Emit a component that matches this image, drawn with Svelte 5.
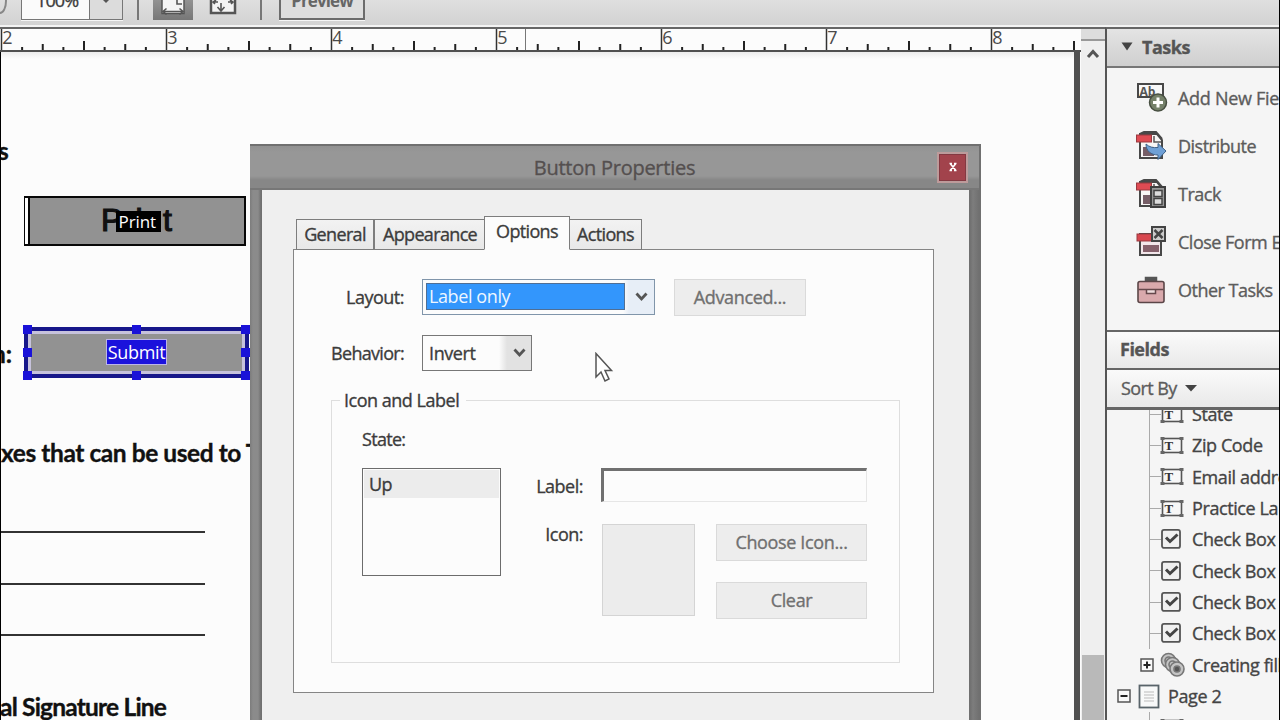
<script>
  const inches = [2, 3, 4, 5, 6, 7, 8];
  const inchWidth = 165;
  const ticks = [];
  for (let i = 0; i <= 52; i++) {
    const x = 1.5 + (i * inchWidth) / 8;
    const height = i % 8 === 0 ? 23 : i % 4 === 0 ? 9 : i % 2 === 0 ? 6 : 3;
    ticks.push({ x, height, major: i % 8 === 0 });
  }

  const tasks = [
    { icon: 'add', label: 'Add New Field' },
    { icon: 'distribute', label: 'Distribute' },
    { icon: 'track', label: 'Track' },
    { icon: 'close', label: 'Close Form Editing' },
    { icon: 'other', label: 'Other Tasks' },
  ];

  const fields = [
    { type: 'text', label: 'State' },
    { type: 'text', label: 'Zip Code' },
    { type: 'text', label: 'Email address' },
    { type: 'text', label: 'Practice Large' },
    { type: 'check', label: 'Check Box 1' },
    { type: 'check', label: 'Check Box 2' },
    { type: 'check', label: 'Check Box 3' },
    { type: 'check', label: 'Check Box 4' },
    { type: 'group', label: 'Creating filler' },
    { type: 'page', label: 'Page 2' },
    { type: 'text', label: '' },
  ];

  const tabs = ['General', 'Appearance', 'Options', 'Actions'];
  const handles = ['nw', 'n', 'ne', 'w', 'e', 'sw', 's', 'se'];
  let activeTab = $state('Options');
</script>

<div class="app">
  <header class="toolbar">
    <div class="zoom-back"></div>
    <div class="zoom">
      <span class="zoom-value">100%</span>
      <span class="zoom-arrow">
        <svg width="12" height="8" viewBox="0 0 12 8"><path d="M0 0h12L6 6z" fill="#555" /></svg>
      </span>
    </div>
    <i class="divider"></i>
    <div class="fit active">
      <svg width="40" height="20" viewBox="0 0 40 20">
        <path d="M9 -2V13.500H31V-2Z" fill="#f4f4f4" stroke="#555" stroke-width="1.500" />
        <path d="M10 11.500H30M13.500 8.500L10 11.500l3.500 3M26.500 8.500L30 11.500l-3.500 3M24 -1v5h5" fill="none" stroke="#555" stroke-width="1.600" />
      </svg>
    </div>
    <div class="fit">
      <svg width="40" height="20" viewBox="0 0 40 20">
        <path d="M8 -3V13H32V-3" fill="#f4f4f4" stroke="#555" stroke-width="2.500" />
        <path d="M18 3v7M14.500 7l3.500 4 3.500-4M10 2h5M30 2h-5M13 0l-3 2 2 2M27 0l3 2-2 2" fill="none" stroke="#555" stroke-width="1.600" />
      </svg>
    </div>
    <i class="divider second"></i>
    <button class="preview"><span>Preview</span></button>
  </header>

  <div class="workspace">
    <div class="viewer">
      <svg class="ruler" width="1081" height="25" viewBox="0 0 1081 21">
        {#each ticks as tick}
          <line x1={tick.x} x2={tick.x} y1={21 - tick.height} y2="21" stroke={tick.major ? '#333' : '#222'} stroke-width={tick.major ? 1.5 : 2} />
        {/each}
        <line x1="525.5" x2="525.5" y1="0" y2="21" stroke="#777" />
        {#each inches as inch, i}
          <text x={2.2 + i * inchWidth} y="14.500">{inch}</text>
        {/each}
      </svg>

      <div class="page">
        <p class="line first">s</p>
        <div class="field print">
          <span class="caption">Print</span>
          <span class="tag">Print</span>
        </div>
        <div class="submit-row">
          <p class="line">n:</p>
          <div class="field submit">
            <span class="tag">Submit</span>
            {#each handles as handle}
              <i class="handle {handle}"></i>
            {/each}
          </div>
        </div>
        <p class="line boxes">xes that can be used to Test</p>
        <hr />
        <hr />
        <hr />
        <p class="line signature">al Signature Line</p>
      </div>
    </div>

    <div class="scrollbar">
      <div class="split"></div>
      <svg width="14" height="12" viewBox="0 0 14 12"><path d="M2 9L7 3.500l5 5.500" fill="none" stroke="#555" stroke-width="3" /></svg>
      <div class="thumb"></div>
    </div>

    <aside>
      <h3 class="tasks-title">
        <svg width="12" height="9" viewBox="0 0 12 9"><path d="M0.500 0.500h11L6 8.500z" fill="#444" /></svg>
        Tasks
      </h3>
      <ul class="tasks">
        {#each tasks as task}
          <li>
            <svg width="34" height="34" viewBox="0 0 34 34">
              {#if task.icon === 'add'}
                <rect x="3" y="3" width="25" height="13" fill="#f8f8f8" stroke="#484848" stroke-width="2" />
                <text x="4.500" y="14.500" class="ab">Ab</text>
                <circle cx="23" cy="21.500" r="8.500" fill="#75816a" stroke="#474f41" stroke-width="1.500" />
                <path d="M23 16.500v10M18 21.500h10" stroke="#fff" stroke-width="3" />
              {:else if task.icon === 'close'}
                <rect x="5" y="9" width="21" height="21" fill="#f2e6ea" stroke="#484848" stroke-width="2" />
                <rect x="2" y="9" width="15" height="7" fill="#d8474f" stroke="#993a40" />
                <rect x="8" y="20" width="16" height="7" fill="#86616c" />
                <rect x="17" y="2" width="13" height="14" fill="#ccc" stroke="#444" stroke-width="2" />
                <path d="M19.500 5l8 8m0-8l-8 8" stroke="#444" stroke-width="2.500" />
              {:else if task.icon === 'other'}
                <path d="M11 8V5h10v3" fill="#555" stroke="#555" stroke-width="2.500" />
                <rect x="3" y="8.500" width="26" height="21" rx="2" fill="#d9a9ac" stroke="#5b4648" stroke-width="1.600" />
                <path d="M3.500 16.500h25M11.500 16.500v4h9v-4" fill="#edd" stroke="#65484b" stroke-width="1.500" />
              {:else}
                <path d="M5 5h17l5 6v18H5z" fill="#f8f6f6" stroke="#484848" stroke-width="2" />
                <path d="M5 5l4-2h12l6 7" fill="none" stroke="#484848" stroke-width="2" />
                <path d="M19 7v6h7" fill="none" stroke="#555" stroke-width="1.500" />
                <rect x="1.500" y="6" width="15" height="7" fill="#df4b53" stroke="#993a40" />
                <rect x="8" y="18" width="11" height="9" fill="#765e67" />
                {#if task.icon === 'distribute'}
                  <path d="M11 15c3 3 7 4 12 3.500V14.500L31 22l-8 8.500V26c-7 0-12-4-12-11z" fill="#6fa0d6" stroke="#3f6288" />
                {:else}
                  <rect x="16" y="10" width="14" height="20" fill="#999" stroke="#3f3f3f" stroke-width="2" />
                  <rect x="19" y="13.500" width="8" height="6" fill="#ddd" stroke="#444" stroke-width="1.500" />
                  <rect x="19" y="21.500" width="8" height="6" fill="#ddd" stroke="#444" stroke-width="1.500" />
                {/if}
              {/if}
            </svg>
            <span>{task.label}</span>
          </li>
        {/each}
      </ul>
      <h3 class="fields-title">Fields</h3>
      <div class="sort">
        Sort By
        <svg width="12" height="7" viewBox="0 0 12 7"><path d="M0 0h12L6 6.500z" fill="#444" /></svg>
      </div>
      <div class="tree">
        {#each fields as field}
          <div class="node {field.type}">
            {#if field.type === 'text'}
              <svg width="24" height="19" viewBox="0 0 24 19">
                <rect x="2.500" y="2.500" width="19" height="14" fill="#f7f7f7" stroke="#555" stroke-width="1.600" />
                <path d="M0.500 1h4v3h-4zM19.500 1h4v3h-4zM0.500 15h4v3h-4zM19.500 15h4v3h-4z" fill="#666" />
                <text x="4.500" y="13.500" class="serif-t">T</text>
              </svg>
            {:else if field.type === 'check'}
              <svg width="24" height="20" viewBox="0 0 24 20">
                <rect x="2" y="0.900" width="18" height="18" rx="2" fill="#f0f0f0" stroke="#555" stroke-width="1.800" />
                <path d="M6 8.500l4 4L17.500 5.500" fill="none" stroke="#444" stroke-width="3" />
              </svg>
            {:else if field.type === 'group'}
              <svg class="toggle" width="14" height="14" viewBox="0 0 14 14"><rect x="1" y="1" width="12" height="12" fill="#f8f8f8" stroke="#555" stroke-width="1.500" /><path d="M7 3.500v7M3.500 7h7" stroke="#222" stroke-width="2" /></svg>
              <svg width="26" height="26" viewBox="0 0 26 26">
                <g fill="#c4c4c4" stroke="#777" stroke-width="1.600">
                  <circle cx="8.500" cy="8.500" r="7" /><circle cx="8.500" cy="8.500" r="3.500" />
                  <circle cx="12.500" cy="12.500" r="7" /><circle cx="12.500" cy="12.500" r="3.500" />
                  <circle cx="17" cy="17" r="7" /><circle cx="17" cy="17" r="3" fill="#555" />
                </g>
              </svg>
            {:else}
              <svg class="toggle" width="14" height="14" viewBox="0 0 14 14"><rect x="1" y="1" width="12" height="12" fill="#f8f8f8" stroke="#555" stroke-width="1.500" /><path d="M3.500 7h7" stroke="#222" stroke-width="2" /></svg>
              <svg width="22" height="25" viewBox="0 0 22 25">
                <rect x="1.500" y="1.500" width="19" height="22" fill="#f8f9f9" stroke="#59646a" stroke-width="1.800" />
                <path d="M6 8h10M6 11h10M6 14h10M6 17h10" stroke="#bbb" />
              </svg>
            {/if}
            <span>{field.label}</span>
          </div>
        {/each}
      </div>
    </aside>
  </div>

  <section class="dialog">
    <div class="titlebar">
      <h2>Button Properties</h2>
      <button class="close" aria-label="Close">
        <svg width="10" height="10" viewBox="0 0 10 10"><path d="M1.500 1.500h2.500M6 1.500h2.500M1.500 8.500h2.500M6 8.500h2.500M2.500 2l5 6M7.500 2l-5 6" stroke="#fff" stroke-width="1.600" /></svg>
      </button>
    </div>
    <div class="body">
      <nav>
        {#each tabs as tab}
          <button class="tab {tab.toLowerCase()}" class:selected={activeTab === tab} onclick={() => (activeTab = tab)}>{tab}</button>
        {/each}
      </nav>
      <div class="panel">
        <div class="row">
          <span class="name layout-name">Layout:</span>
          <div class="select layout">
            <span class="value">Label only</span>
            <svg width="13" height="10" viewBox="0 0 13 10"><path d="M1.500 1.500l5 5.500 5-5.500" fill="none" stroke="#555" stroke-width="2.800" /></svg>
          </div>
          <button class="btn advanced">Advanced...</button>
        </div>
        <div class="row second">
          <span class="name behavior-name">Behavior:</span>
          <div class="select behavior">
            <span class="value">Invert</span>
            <svg width="13" height="10" viewBox="0 0 13 10"><path d="M1.500 1.500l5 5.500 5-5.500" fill="none" stroke="#555" stroke-width="2.800" /></svg>
          </div>
        </div>
        <div class="group-box">
          <span class="legend">Icon and Label</span>
          <div class="columns">
            <div class="states">
              <span class="state-name">State:</span>
              <div class="listbox"><div class="option">Up</div></div>
            </div>
            <div class="names">
              <span>Label:</span>
              <span>Icon:</span>
            </div>
            <div class="controls">
              <div class="input"></div>
              <div class="icon-row">
                <div class="thumbnail"></div>
                <div class="actions-col">
                  <button class="btn choose">Choose Icon...</button>
                  <button class="btn clear">Clear</button>
                </div>
              </div>
            </div>
          </div>
        </div>
      </div>
    </div>
  </section>

  <svg class="cursor" width="20" height="32" viewBox="0 0 20 32">
    <path d="M2 1.500V25l5-5 4 9 4-2-4-8.500h6.500z" fill="#fff" stroke="#555" stroke-width="1.500" />
  </svg>
</div>

<style>
  :global(body) {
    margin: 0;
    overflow: hidden;
  }

  .app {
    position: relative;
    box-sizing: border-box;
    width: 1280px;
    height: 720px;
    display: flex;
    flex-direction: column;
    overflow: hidden;
    border-right: 1px solid #000;
    background: #fcfcfc;
    font-family: 'Open Sans', 'Noto Sans', sans-serif;
    font-size: 18px;
    color: #3c3c3c;
    -webkit-text-stroke: 0.35px currentColor;
  }

  .app * {
    box-sizing: border-box;
  }

  h2,
  h3,
  p,
  ul {
    margin: 0;
    padding: 0;
  }

  button {
    font: inherit;
    color: inherit;
    padding: 0;
  }

  svg {
    display: block;
    flex: none;
  }

  svg text {
    -webkit-text-stroke: 0;
  }

  /* Toolbar */
  .toolbar {
    flex: none;
    height: 27px;
    display: flex;
    align-items: flex-start;
    background: linear-gradient(#dfdfdf, #d2d2d2);
    border-bottom: 2px solid #f3f3f3;
    overflow: hidden;
  }

  .zoom-back {
    width: 14px;
    height: 26px;
    margin: -12px 14px 0 -7px;
    border: 2px solid #888;
    border-radius: 50%;
  }

  .zoom {
    display: flex;
    width: 102px;
    height: 20px;
    border: 1.5px solid #777;
    border-top: 0;
    background: #fbfbfb;
    box-shadow: 0 1px 0 #f5f5f5;
  }

  .zoom-value {
    width: 67px;
    padding-left: 14px;
    line-height: 20px;
    margin-top: -10px;
    letter-spacing: -0.9px;
  }

  .zoom-arrow {
    flex: 1;
    display: flex;
    justify-content: center;
    border-left: 1.5px solid #777;
    background: #dcdcdc;
  }

  .zoom-arrow svg {
    margin-top: -3px;
  }

  .divider {
    width: 2px;
    height: 20px;
    margin: 0 14px;
    background: #777;
  }

  .divider.second {
    margin: 0 18px 0 17px;
  }

  .fit {
    width: 40px;
    height: 20px;
    margin-right: 10px;
    overflow: hidden;
  }

  .fit + .fit {
    margin-right: 0;
  }

  .fit.active {
    background: linear-gradient(#929292, #777);
  }

  .preview {
    display: flex;
    justify-content: center;
    align-items: flex-start;
    width: 86px;
    height: 20px;
    margin-left: -1px;
    border: 2px solid #6c6c6c;
    border-top: 0;
    background: #dedede;
    color: #666;
    font-weight: 700;
    font-size: 17px;
    line-height: 20px;
    letter-spacing: -0.9px;
    box-shadow: 0 1px 0 #f5f5f5;
  }

  .preview span {
    margin-top: -9px;
    -webkit-text-stroke: 0;
  }

  .workspace {
    flex: 1;
    min-height: 0;
    display: flex;
  }

  .viewer {
    flex: none;
    width: 1081px;
    display: flex;
    flex-direction: column;
  }

  .ruler {
    height: 25px;
    border-top: 2px solid #666;
    border-bottom: 2px solid #505050;
    background: #fcfcfc;
  }

  .ruler text {
    font-size: 18px;
    fill: #4a4a4a;
  }

  /* Document */
  .page {
    width: 1080px;
    flex: 1;
    min-height: 0;
    padding-top: 85px;
    border-left: 1px solid #000;
    border-right: 6px solid #505050;
    overflow: hidden;
    background: linear-gradient(#ececec, #fcfcfc 7px);
    color: #111;
  }

  .line {
    font-family: Lato, 'Open Sans', sans-serif;
    font-size: 24.5px;
    font-weight: 700;
    line-height: 28px;
    white-space: nowrap;
  }

  .line.first {
    margin-left: -3px;
  }

  .field {
    position: relative;
    display: flex;
    align-items: center;
    justify-content: center;
    background: #929292;
  }

  .tag {
    position: relative;
    color: #fff;
    font-size: 18px;
    line-height: 23px;
    -webkit-text-stroke: 0;
  }

  .print {
    width: 222px;
    height: 50px;
    margin: 31px 0 0 23px;
    border: 2.5px solid #080808;
    border-left-width: 3px;
  }

  .print::before {
    content: '';
    box-sizing: content-box;
    align-self: stretch;
    width: 3px;
    margin-left: -2px;
    margin-right: auto;
    border-right: 2px solid #080808;
    background: #fff;
  }

  .caption {
    position: absolute;
    left: 74px;
    top: 0;
    font-family: 'Liberation Sans', sans-serif;
    font-size: 32px;
    line-height: 45px;
    letter-spacing: 1.3px;
    -webkit-text-stroke: 1.2px currentColor;
  }

  .print .tag {
    width: 45px;
    padding-left: 3px;
    margin-right: auto;
    margin-left: 2px;
    font-size: 17px;
    letter-spacing: -0.1px;
    line-height: 21px;
    background: #000;
  }

  .submit-row {
    display: flex;
    align-items: center;
    height: 52px;
    margin-top: 80px;
  }

  .submit-row .line {
    flex: none;
    width: 23px;
    padding-top: 3px;
    text-indent: -9px;
  }

  .submit {
    width: 225px;
    height: 51px;
    border: 4px solid #17178a;
    box-shadow: inset 0 0 0 3px #c6c2dc;
  }

  .submit .tag {
    background: #1b12dc;
    outline: 1px solid #bbb4ea;
    padding: 0 1px;
    line-height: 24px;
    letter-spacing: -0.3px;
  }

  .handle {
    position: absolute;
    width: 9px;
    height: 9px;
    background: #1a12d8;
  }

  .nw, .n, .ne { top: -6px; }
  .w, .e { top: 17px; }
  .sw, .s, .se { bottom: -6px; }
  .nw, .w, .sw { left: -5px; }
  .n, .s { left: 104px; }
  .ne, .e, .se { right: -5px; }

  .boxes {
    margin-top: 61px;
    letter-spacing: -0.43px;
  }

  hr {
    width: 204px;
    height: 2px;
    margin: 0 0 49.5px;
    border: 0;
    background: #333;
  }

  .boxes + hr {
    margin-top: 64px;
  }

  .signature {
    margin-top: 57px;
    letter-spacing: -0.8px;
    margin-left: -1px;
  }

  /* Scrollbar */
  .scrollbar {
    flex: none;
    width: 24px;
    display: flex;
    flex-direction: column;
    align-items: center;
    background: #efefef;
    border-top: 2px solid #666;
  }

  .split {
    width: 100%;
    height: 12px;
    background: #ddd;
    border-bottom: 2px solid #999;
    margin-bottom: 7px;
  }

  .thumb {
    width: 22px;
    height: 65px;
    margin-top: auto;
    background: #b9b9b9;
  }

  /* Sidebar */
  aside {
    flex: 1;
    min-width: 0;
    display: flex;
    flex-direction: column;
    overflow: hidden;
    border-left: 2px solid #555;
    border-top: 2px solid #666;
    background: #f5f5f5;
    white-space: nowrap;
    color: #5c5c5c;
  }

  h3 {
    flex: none;
    font-size: 18px;
    font-weight: 700;
    letter-spacing: -0.5px;
    color: #555;
  }

  .tasks-title {
    display: flex;
    align-items: center;
    gap: 9px;
    height: 39px;
    padding: 0 0 2px 14px;
    background: linear-gradient(#e4e4e4, #cfcfcf);
    border-bottom: 2px solid #777;
  }

  .tasks {
    flex: none;
    height: 262px;
    padding-top: 6px;
    list-style: none;
  }

  .tasks li {
    height: 48px;
    display: flex;
    align-items: center;
    gap: 9px;
    padding-left: 28px;
    letter-spacing: -0.5px;
  }

  .tasks li:first-child {
    letter-spacing: -0.3px;
  }

  .ab {
    font-size: 12px;
    font-weight: 700;
    letter-spacing: 0;
    fill: #555;
  }

  .fields-title {
    height: 40px;
    padding-left: 13px;
    line-height: 35px;
    border-top: 2px solid #666;
    border-bottom: 2px solid #666;
    background: linear-gradient(#fafafa, #e9e9e9);
  }

  .sort {
    flex: none;
    display: flex;
    align-items: center;
    gap: 8px;
    height: 40px;
    padding: 0 0 1px 14px;
    letter-spacing: -0.6px;
    background: linear-gradient(#fafafa, #e9e9e9);
    border-bottom: 3px solid #666;
  }

  .tree {
    flex: 1;
    min-height: 0;
    overflow: hidden;
    color: #444;
    letter-spacing: -0.4px;
  }

  .node {
    height: 31.33px;
    display: flex;
    align-items: center;
    padding-left: 42px;
  }

  .node:first-child {
    margin-top: -11.5px;
  }

  .node span {
    margin-left: 8px;
  }

  .text::before,
  .check::before {
    content: '';
    flex: none;
    width: 11px;
    height: 31.33px;
    border-left: 1px solid #aaa;
    background: linear-gradient(#aaa, #aaa) center / 100% 1px no-repeat;
  }

  .text svg,
  .check svg {
    margin-left: -1px;
  }

  .node.group {
    padding-left: 33px;
  }

  .group .toggle {
    margin-right: 6px;
  }

  .group span {
    margin-left: 6px;
  }

  .node.page {
    width: auto;
    border: 0;
    background: none;
    padding-top: 0;
    padding-left: 10px;
    color: inherit;
    flex: none;
    overflow: visible;
  }

  .page .toggle {
    margin-right: 7px;
  }

  .serif-t {
    font-family: 'Liberation Serif', serif;
    font-weight: 700;
    font-size: 13px;
    fill: #333;
  }

  /* Dialog */
  .dialog {
    position: absolute;
    left: 250px;
    top: 144px;
    width: 731px;
    height: 600px;
    display: flex;
    flex-direction: column;
    padding: 0 12px;
    border-top: 2px solid #707070;
    background: linear-gradient(90deg, #7c7c7c, #8b8b8b 3px 8px, #707070 11px 720px, #7d7d7d 723px, #707070 729px);
  }

  .titlebar {
    flex: none;
    height: 44px;
    display: flex;
    align-items: center;
    margin: 0 -10px 0 -12px;
    border-bottom: 2px solid #777;
    background: linear-gradient(#929292, #979797 6px 30px, #878787 34px);
  }

  h2 {
    flex: 1;
    padding-left: 42px;
    text-align: center;
    font-size: 20px;
    font-weight: 400;
    letter-spacing: -0.25px;
    color: #544f4f;
  }

  .close {
    width: 31px;
    height: 31px;
    margin-right: 11px;
    display: flex;
    align-items: center;
    justify-content: center;
    border: 2px solid #bd9b9b;
    background: #a2434c;
    box-shadow: inset 0 0 0 1px #833942;
  }

  .body {
    flex: 1;
    padding: 26px 35px 0 31px;
    background: #efefef;
  }

  nav {
    position: relative;
    z-index: 1;
    display: flex;
    align-items: flex-end;
    height: 34px;
    padding-left: 3px;
    margin-bottom: -1px;
  }

  .tab {
    height: 31px;
    padding-bottom: 1px;
    border: 1.5px solid #7d7d7d;
    border-right-width: 1px;
    background: linear-gradient(#f2f2f2, #e8e8e8);
    line-height: 28px;
    letter-spacing: -0.65px;
  }

  .general { width: 78px; }
  .appearance { width: 110px; border-right: 0; padding-left: 1px; }
  .options { width: 86px; }
  .actions { width: 72px; border-left: 0; }

  .tab.selected {
    height: 34px;
    padding-bottom: 4px;
    background: #fcfcfc;
    border-bottom-color: #fcfcfc;
  }

  .panel {
    width: 641px;
    height: 444px;
    padding: 29px 33px 0 37px;
    border: 1px solid #858585;
    background: #fcfcfc;
  }

  .row {
    display: flex;
    align-items: flex-start;
  }

  .row.second {
    margin-top: 19px;
  }

  .name {
    width: 73px;
    margin-right: 18px;
    line-height: 36px;
    text-align: right;
    white-space: nowrap;
    letter-spacing: -0.5px;
  }

  .behavior-name {
    letter-spacing: -0.7px;
  }

  .select {
    height: 36px;
    display: flex;
    align-items: center;
    border: 1.5px solid #777;
    background: #fcfcfc;
  }

  .select .value {
    letter-spacing: -0.4px;
  }

  .layout {
    width: 233px;
    border-color: #8095aa;
    background: linear-gradient(90deg, #fcfcfc 200px, #e7eef7 206px);
  }

  .layout .value {
    width: 199px;
    height: 27px;
    margin: -1px 10px 0 3px;
    padding-left: 2px;
    line-height: 25px;
    border: 1px solid #506f95;
    background: #3396fc;
    color: #eef6ff;
    -webkit-text-stroke: 0;
  }

  .behavior {
    width: 110px;
    padding-left: 6px;
    background: linear-gradient(90deg, #fcfcfc 76px, #e2e2e2 84px);
  }

  .behavior .value {
    width: 84px;
    margin-top: -1px;
  }

  .btn {
    height: 37px;
    border: 1px solid #dadada;
    background: #ededed;
    color: #707070;
    line-height: 33px;
  }

  .advanced {
    width: 132px;
    margin-left: 19px;
    letter-spacing: -0.35px;
  }

  .group-box {
    width: 569px;
    height: 263px;
    margin-top: 29px;
    border: 1.5px solid #dedede;
  }

  .legend {
    display: block;
    width: 126px;
    height: 24px;
    margin: -13px 0 0 8px;
    padding-left: 4px;
    line-height: 25px;
    white-space: nowrap;
    letter-spacing: -0.48px;
    background: #fcfcfc;
  }

  .columns {
    display: flex;
    padding: 15px 0 0 30px;
    letter-spacing: -0.5px;
  }

  .states {
    width: 139px;
  }

  .state-name {
    display: block;
    line-height: 24px;
    margin-bottom: 17px;
    letter-spacing: -0.7px;
  }

  .listbox {
    height: 108px;
    padding: 1px;
    border: 1.5px solid #6c6c6c;
  }

  .option {
    height: 28px;
    padding-left: 5px;
    line-height: 28px;
    background: #ececec;
  }

  .names {
    width: 82px;
    display: flex;
    flex-direction: column;
    gap: 24px;
    padding-top: 47px;
    line-height: 24px;
    text-align: right;
  }

  .controls {
    padding: 41px 0 0 18px;
  }

  .input {
    width: 266px;
    height: 34px;
    border: 1px solid #e6e6e6;
    border-top: 3px solid #707070;
    border-left: 3px solid #707070;
  }

  .icon-row {
    display: flex;
    gap: 21px;
    margin: 22px 0 0 1px;
  }

  .thumbnail {
    width: 93px;
    height: 92px;
    border: 1px solid #d4d4d4;
    background: #ececec;
  }

  .actions-col {
    display: flex;
    flex-direction: column;
    gap: 21px;
  }

  .actions-col .btn {
    width: 151px;
    letter-spacing: -0.35px;
  }

  .cursor {
    position: absolute;
    left: 594px;
    top: 352px;
  }
</style>
